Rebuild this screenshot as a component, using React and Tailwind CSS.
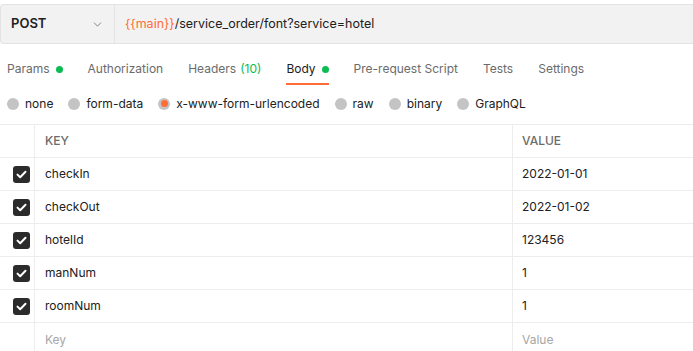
import { ChevronDown } from 'lucide-react'

const tabs = [
    { label: 'Params', dot: true },
    { label: 'Authorization' },
    { label: 'Headers', count: '(10)' },
    { label: 'Body', dot: true, active: true },
    { label: 'Pre-request Script' },
    { label: 'Tests' },
    { label: 'Settings' },
]

const bodyTypes = ['none', 'form-data', 'x-www-form-urlencoded', 'raw', 'binary', 'GraphQL']

const rows = [
    { key: 'checkIn', value: '2022-01-01' },
    { key: 'checkOut', value: '2022-01-02' },
    { key: 'hotelId', value: '123456' },
    { key: 'manNum', value: '1' },
    { key: 'roomNum', value: '1' },
]

function Checkbox() {
    return (
        <div className="w-[17px] h-[17px] rounded-[3px] bg-[#2b2b2b] flex items-center justify-center">
            <svg width="11" height="9" viewBox="0 0 11 9" fill="none">
                <path d="M1.5 4.6 L4.2 7.2 L9.5 1.8" stroke="white" strokeWidth="2" strokeLinecap="round" strokeLinejoin="round" />
            </svg>
        </div>
    )
}

export default function App() {
    return (
        <div className="w-[693px] h-[351px] bg-white overflow-hidden text-[#212121]" style={{ fontFamily: 'Inter, "Noto Sans", sans-serif' }}>
            {/* URL bar */}
            <div className="pt-1">
                <div className="flex h-[40px] bg-[#f2f2f2] border border-[#e3e3e3] rounded-l-[4px] border-r-0">
                    <div className="w-[114px] shrink-0 flex items-center justify-between pl-[10px] pr-[10px] border-r border-[#e3e3e3]">
                        <span className="text-[13px] font-semibold text-[#212121]">POST</span>
                        <ChevronDown className="w-[13px] h-[13px] text-[#6b6b6b]" strokeWidth={1.5} />
                    </div>
                    <div className="flex items-center pl-[10px] text-[12.5px]">
                        <span className="text-[#ff6c37]">{'{{main}}'}</span>
                        <span className="text-[#212121]">/service_order/font?service=hotel</span>
                    </div>
                </div>
            </div>

            {/* Tabs */}
            <div className="flex items-stretch h-[40px] pl-[7px] text-[12px]">
                {tabs.map((t, i) => (
                    <div key={t.label} className={`relative flex items-center gap-[6px] pt-[10px] ${i < tabs.length - 1 ? 'mr-[25px]' : ''}`}>
                        <span className={t.active ? 'text-[#212121]' : 'text-[#6b6b6b]'}>{t.label}</span>
                        {t.count && <span className="text-[#0cbb52] -ml-[2px]">{t.count}</span>}
                        {t.dot && <span className="w-[7px] h-[7px] rounded-full bg-[#0cbb52]" />}
                        {t.active && <span className="absolute left-0 right-0 bottom-[-1px] h-[2px] bg-[#ff6c37]" />}
                    </div>
                ))}
            </div>

            {/* Body types */}
            <div className="flex items-center h-[40px] pl-[7px] pb-[1px] text-[12px]">
                {bodyTypes.map((b, i) => {
                    const on = b === 'x-www-form-urlencoded'
                    return (
                        <div key={b} className={`flex items-center gap-[6px] ${i < bodyTypes.length - 1 ? 'mr-[15px]' : ''}`}>
                            <span className="w-[12px] h-[12px] rounded-full bg-[#c4c4c4] flex items-center justify-center">
                                {on && <span className="w-[7px] h-[7px] rounded-full bg-[#ff6c37]" />}
                            </span>
                            <span className="text-[#212121]">{b}</span>
                        </div>
                    )
                })}
            </div>

            {/* Table */}
            <div className="border-t border-[#ededed] text-[12px]">
                <div className="flex h-[33px] border-b border-[#ededed]">
                    <div className="w-[35px] shrink-0 border-r border-[#ededed]" />
                    <div className="w-[478px] shrink-0 border-r border-[#ededed] flex items-center pl-[10px] font-medium text-[#6b6b6b]">KEY</div>
                    <div className="flex-1 flex items-center pl-[9px] font-medium text-[#6b6b6b]">VALUE</div>
                </div>
                {rows.map(r => (
                    <div key={r.key} className="flex h-[33px] border-b border-[#ededed]">
                        <div className="w-[35px] shrink-0 border-r border-[#ededed] flex items-center pl-[13px]">
                            <Checkbox />
                        </div>
                        <div className="w-[478px] shrink-0 border-r border-[#ededed] flex items-center pl-[10px]">{r.key}</div>
                        <div className="flex-1 flex items-center pl-[9px]">{r.value}</div>
                    </div>
                ))}
                <div className="flex h-[33px]">
                    <div className="w-[35px] shrink-0 border-r border-[#ededed]" />
                    <div className="w-[478px] shrink-0 border-r border-[#ededed] flex items-center pl-[10px] text-[#a6a6a6]">Key</div>
                    <div className="flex-1 flex items-center pl-[9px] text-[#a6a6a6]">Value</div>
                </div>
            </div>
        </div>
    )
}
